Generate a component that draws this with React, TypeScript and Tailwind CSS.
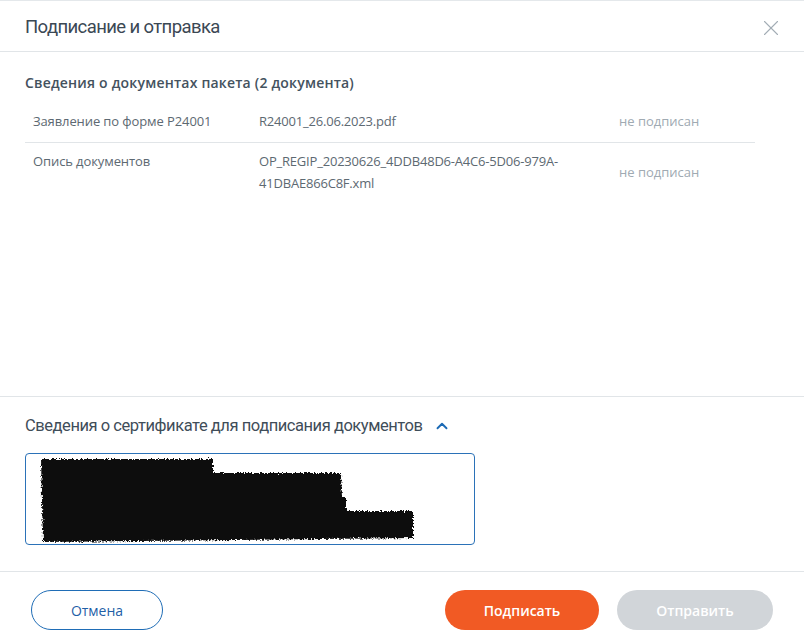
import { ChevronUp, X } from 'lucide-react';

const docs = [
  { name: 'Заявление по форме Р24001', file: 'R24001_26.06.2023.pdf', status: 'не подписан' },
  {
    name: 'Опись документов',
    file: 'OP_REGIP_20230626_4DDB48D6-A4C6-5D06-979A-41DBAE866C8F.xml',
    status: 'не подписан',
  },
];

const narrow = { fontFamily: 'Roboto, "Liberation Sans", sans-serif' };

function Scribble() {
  return (
    <svg width="448" height="90" viewBox="0 0 448 90" className="block">
      <defs>
        <filter id="rough" x="-5%" y="-10%" width="110%" height="120%">
          <feTurbulence type="fractalNoise" baseFrequency="0.6" numOctaves="2" seed="3" />
          <feDisplacementMap in="SourceGraphic" scale="5" />
        </filter>
      </defs>
      <polygon
        points="15,5 187,5 187,19 315,19 316,44 320,44 320,57 387,57 387,84 17,88"
        fill="#0a0a0a"
        filter="url(#rough)"
      />
    </svg>
  );
}

export default function App() {
  return (
    <div
      className="w-[804px] h-[642px] bg-white flex flex-col border-t border-[#e4e8eb] overflow-hidden"
      style={{ fontFamily: '"Open Sans", "Noto Sans", sans-serif' }}
    >
      <div className="h-[51px] flex items-center justify-between pl-[25px] pr-[20px] pt-[3px] border-b border-[#e1e5e8]">
        <h1 className="text-[18.5px] tracking-[-0.6px] text-[#3b4854]" style={narrow}>
          Подписание и отправка
        </h1>
        <X className="w-[26px] h-[26px] text-[#a3adb5]" strokeWidth={1} />
      </div>

      <div className="h-[344px] px-[25px] pt-[21px]">
        <h2 className="text-[14px] leading-[20px] font-semibold tracking-[0.2px] text-[#44525e]">
          Сведения о документах пакета (2 документа)
        </h2>
        <div className="mt-[7px] w-[730px]">
          {docs.map((d, i) => (
            <div
              key={d.file}
              className={`flex items-center text-[13px] leading-[22px] ${
                i === 0 ? 'pt-[10px] pb-[10px] border-b border-[#e1e5e8]' : 'pt-[7px] pb-[10px]'
              }`}
            >
              <div className="w-[234px] pl-[8px] self-start text-[#5d6972] tracking-[-0.1px]">{d.name}</div>
              <div className="w-[350px] pr-[20px] break-words text-[#5d6972] tracking-[-0.2px]">{d.file}</div>
              <div className="pl-[10px] text-[#a0aab2]">{d.status}</div>
            </div>
          ))}
        </div>
      </div>

      <div className="border-t border-[#e1e5e8] px-[25px] pt-[18px] pb-[26px]">
        <div className="flex items-center gap-[11px] h-[22px]">
          <span className="text-[16.5px] tracking-[-0.45px] text-[#3f4d59]" style={narrow}>
            Сведения о сертификате для подписания документов
          </span>
          <ChevronUp className="w-[18px] h-[18px] text-[#1c6ab5]" strokeWidth={2.5} />
        </div>
        <div className="mt-[16px] w-[450px] h-[92px] border border-[#2b72b8] rounded-[4px]">
          <Scribble />
        </div>
      </div>

      <div className="flex-1 border-t border-[#e1e5e8] flex items-start justify-between px-[31px] pt-[18px]">
        <button className="w-[132px] h-[40px] rounded-full border border-[#1f6db6] text-[#1f5fa7] text-[14px] font-medium">
          Отмена
        </button>
        <div className="flex gap-[18px]">
          <button className="w-[154px] h-[40px] rounded-full bg-[#f15a24] text-white text-[14px] font-semibold">
            Подписать
          </button>
          <button className="w-[156px] h-[40px] rounded-full bg-[#d1d5d9] text-white text-[14px] font-semibold">
            Отправить
          </button>
        </div>
      </div>
    </div>
  );
}
